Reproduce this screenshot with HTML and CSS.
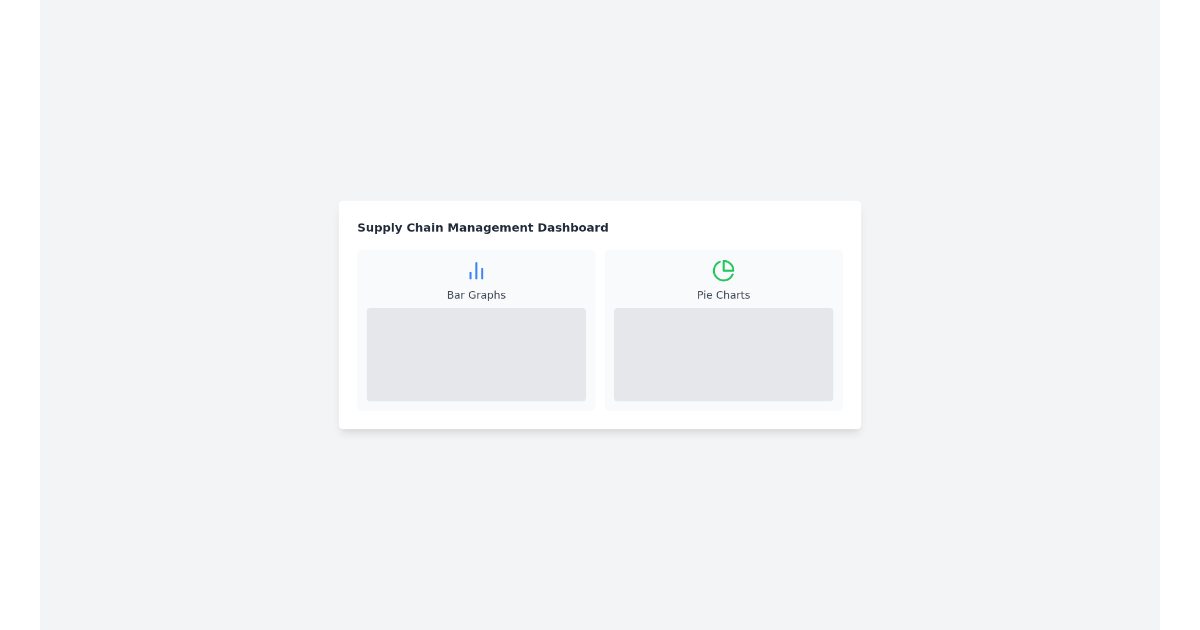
FILE: index.html
```html
<!DOCTYPE html>
<html lang="en">
<head>
    <meta charset="UTF-8">
    <title>Supply Chain Management Dashboard</title>
    <link rel="stylesheet" href="styles.css">
</head>
<body>
    <div class="pagina">
        <div class="tarjeta">
            <h1 class="titulo">Supply Chain Management Dashboard</h1>
            <div class="rejilla">
                <div class="panel">
                    <svg class="icono icono-azul" viewBox="0 0 24 24">
                        <line x1="18" y1="20" x2="18" y2="10"></line>
                        <line x1="12" y1="20" x2="12" y2="4"></line>
                        <line x1="6" y1="20" x2="6" y2="14"></line>
                    </svg>
                    <p class="etiqueta">Bar Graphs</p>
                    <div class="grafico"></div>
                </div>
                <div class="panel">
                    <svg class="icono icono-verde" viewBox="0 0 24 24">
                        <path d="M21.21 15.89A10 10 0 1 1 8 2.83"></path>
                        <path d="M22 12A10 10 0 0 0 12 2v10z"></path>
                    </svg>
                    <p class="etiqueta">Pie Charts</p>
                    <div class="grafico"></div>
                </div>
            </div>
        </div>
    </div>
</body>
</html>
```
FILE: styles.css
```css
html, body {
    height: 100%;
}

body {
    margin: 0;
    background-color: white;
    font-family: "DejaVu Sans", sans-serif;
}

.pagina {
    width: 1120px;
    height: 100%;
    margin: 0 auto;
    background-color: #f3f4f6;
    display: flex;
    justify-content: center;
    align-items: center;
}

/* La tarjeta se escribe a tamaño normal y se reduce entera */
.tarjeta {
    flex: none;
    width: 896px;
    box-sizing: border-box;
    padding: 32px;
    background-color: white;
    border-radius: 8px;
    box-shadow: 0 10px 15px -3px rgba(0, 0, 0, 0.1), 0 4px 6px -4px rgba(0, 0, 0, 0.1);
    transform: scale(0.58333);
    will-change: transform;
}

.titulo {
    margin: 0 0 24px;
    font-size: 20px;
    line-height: 28px;
    font-weight: 700;
    color: #1f2937;
}

.rejilla {
    display: grid;
    grid-template-columns: 1fr 1fr;
    gap: 16px;
}

.panel {
    padding: 16px;
    background-color: #f9fafb;
    border-radius: 8px;
    display: flex;
    flex-direction: column;
    align-items: center;
}

.icono {
    width: 40px;
    height: 40px;
    fill: none;
    stroke-width: 2;
    stroke-linecap: round;
    stroke-linejoin: round;
}

.icono-azul {
    stroke: #3b82f6;
}

.icono-verde {
    stroke: #22c55e;
}

.etiqueta {
    margin: 8px 0;
    font-size: 18px;
    line-height: 28px;
    color: #374151;
}

.grafico {
    width: 100%;
    height: 160px;
    background-color: #e5e7eb;
    border-radius: 6px;
}
```
